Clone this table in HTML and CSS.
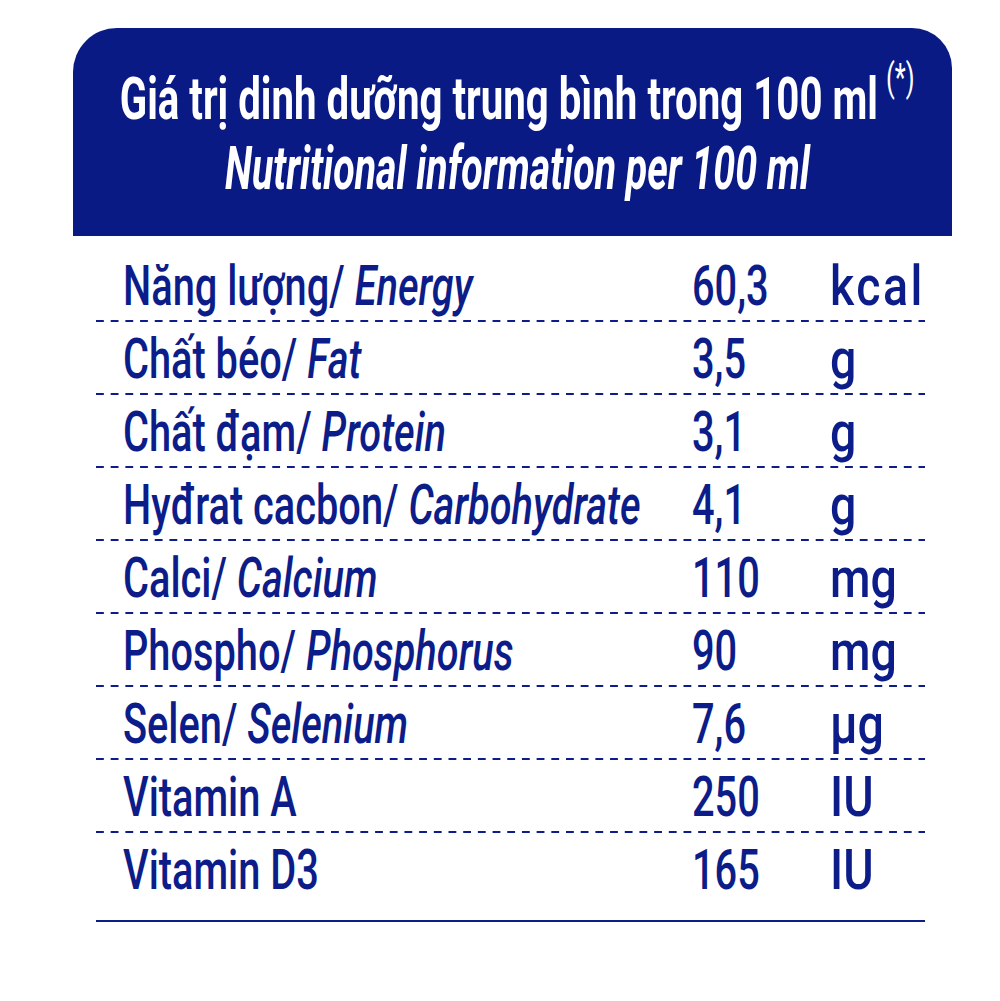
FILE: index.html
```html
<!DOCTYPE html>
<html lang="vi">
<head>
<meta charset="utf-8">
<title>Nutritional information</title>
<link rel="stylesheet" href="styles.css">
</head>
<body>
<div class="card">
  <div class="header">
    <div class="title-line"><span class="t1">Giá trị dinh dưỡng trung bình trong 100 ml<sup class="star">(*)</sup></span></div>
    <div class="title-line"><span class="t2">Nutritional information per 100 ml</span></div>
  </div>
  <div class="table">
    <div class="row"><span class="name">Năng lượng/ <i>Energy</i></span><span class="val">60,3</span><span class="unit kcal">kcal</span></div>
    <div class="row"><span class="name">Chất béo/ <i>Fat</i></span><span class="val">3,5</span><span class="unit">g</span></div>
    <div class="row"><span class="name">Chất đạm/ <i>Protein</i></span><span class="val">3,1</span><span class="unit">g</span></div>
    <div class="row"><span class="name">Hyđrat cacbon/ <i>Carbohydrate</i></span><span class="val">4,1</span><span class="unit">g</span></div>
    <div class="row"><span class="name">Calci/ <i>Calcium</i></span><span class="val">110</span><span class="unit">mg</span></div>
    <div class="row"><span class="name">Phospho/ <i>Phosphorus</i></span><span class="val">90</span><span class="unit">mg</span></div>
    <div class="row"><span class="name">Selen/ <i>Selenium</i></span><span class="val">7,6</span><span class="unit">µg</span></div>
    <div class="row"><span class="name">Vitamin A</span><span class="val">250</span><span class="unit">IU</span></div>
    <div class="row last"><span class="name">Vitamin D3</span><span class="val">165</span><span class="unit">IU</span></div>
  </div>
</div>
</body>
</html>
```

FILE: styles.css
```css
html, body {
  margin: 0;
  padding: 0;
  background: #ffffff;
  overflow: hidden;
}

body {
  font-family: Roboto, "Noto Sans", sans-serif;
  color: #0c1d8a;
}

.card {
  width: 879px;
  margin: 28px 0 0 73px;
}

.header {
  height: 208px;
  box-sizing: border-box;
  background: #0a1a84;
  border-radius: 44px 40px 0 0;
  color: #ffffff;
  display: flex;
  flex-direction: column;
  align-items: center;
  padding: 36px 0 0 10px;
  overflow: hidden;
}

.title-line {
  height: 70px;
  line-height: 70px;
  white-space: nowrap;
}

.t1, .t2 {
  display: inline-block;
  font-weight: 700;
  font-size: 60px;
  transform-origin: center;
}

.t1 {
  transform: scaleX(0.67);
}

.t2 {
  font-style: italic;
  transform: scaleX(0.655);
}

.star {
  font-size: 38px;
  font-weight: 400;
  vertical-align: 0;
  position: relative;
  top: -28px;
  margin-left: 12px;
}

.table {
  margin: 0 27px 0 23px;
  padding-top: 13px;
  border-bottom: 2px solid #0c1d8a;
  padding-bottom: 14px;
}

.row {
  display: grid;
  grid-template-columns: 569px 138px 1fr;
  padding: 4px 0 2px 27px;
  height: 67px;
  line-height: 67px;
  font-size: 56px;
  font-weight: 500;
  white-space: nowrap;
  background: linear-gradient(to right, #0c1d8a 8px, transparent 8px) left bottom / 14.7px 2px repeat-x;
}

.row.last {
  background: none;
}

.name, .val, .unit {
  display: inline-block;
  transform-origin: left center;
}

.name, .val {
  transform: scaleX(0.71);
}

.unit {
  transform: scaleX(0.83);
}

.kcal {
  letter-spacing: 3px;
}
```
